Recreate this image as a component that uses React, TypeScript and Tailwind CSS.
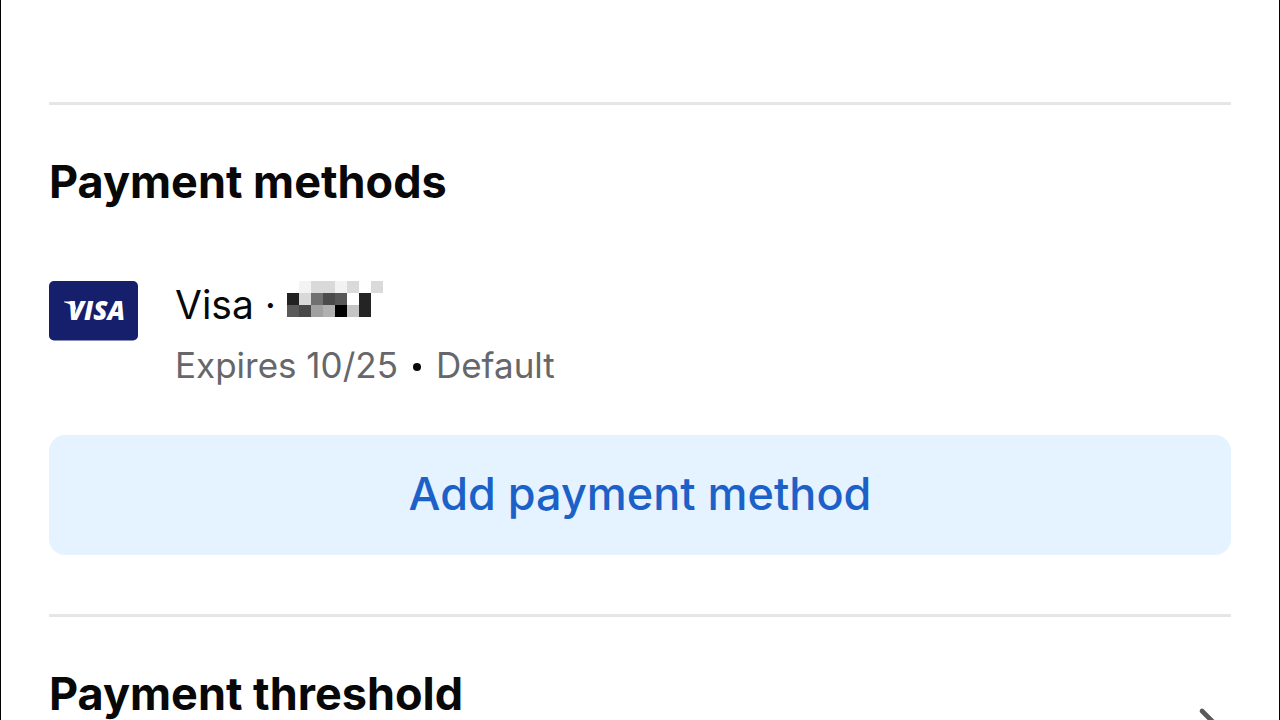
import React from 'react';
import { ChevronRight } from 'lucide-react';

// Blurred-out card digits, one shade per block, row by row
const MASK: string[] = [
  '#ffffff', '#f3f3f3', '#d9d9d9', '#d9d9d9', '#f2f2f2', '#dadada', '#fefefe', '#dadada',
  '#222222', '#d9d9d9', '#707070', '#4b4b4b', '#585858', '#ffffff', '#242424', '#ffffff',
  '#5a5a5a', '#484848', '#a0a0a0', '#b0b0b0', '#000000', '#c4c4c4', '#242424', '#ffffff',
];

const MaskedNumber: React.FC = () => (
  <span className="grid grid-cols-8 self-start" role="img" aria-label="Card number hidden">
    {MASK.map((color, i) => (
      <span key={i} className="size-3" style={{ backgroundColor: color }} />
    ))}
  </span>
);

const VisaBadge: React.FC = () => (
  <svg viewBox="0 0 90 60" className="h-[60px] w-[90px] shrink-0" role="img" aria-label="Visa">
    <rect width="89" height="59.5" rx="5" fill="#151f6b" />
    <path d="M15 20.5h8q2.500 0 3 2.500l1.500 7q-2.500-6.200-12.500-8.700z" fill="#fff" />
    <text
      x="19"
      y="39"
      fill="#fff"
      fontSize="26"
      fontWeight="800"
      fontStyle="italic"
      fontFamily="'Open Sans', sans-serif"
    >
      VISA
    </text>
  </svg>
);

const SectionTitle: React.FC<{ children: React.ReactNode }> = ({ children }) => (
  <h2 className="text-[45px] leading-[57px] font-bold text-[#080809]">{children}</h2>
);

const App: React.FC = () => {
  return (
    <main className="min-h-screen border-x border-black bg-white px-12 pt-[102px] font-['Inter',sans-serif]">
      <section className="border-t-3 border-[#e5e6e8] pt-12">
        <SectionTitle>Payment methods</SectionTitle>

        <div className="mt-[71px] flex items-start gap-9">
          <VisaBadge />
          <div>
            <div className="flex h-12 items-center gap-[11px] text-[39px] leading-12 text-[#080809]">
              <span>Visa</span>
              <span>·</span>
              <MaskedNumber />
            </div>
            <div className="mt-3 flex items-center gap-[15px] text-[35px] leading-12 text-[#65676b]">
              <span>Expires 10/25</span>
              <span className="mt-1 size-2 rounded-full bg-[#080809]" />
              <span>Default</span>
            </div>
          </div>
        </div>

        <button
          type="button"
          className="mt-[46px] h-[120px] w-full rounded-2xl bg-[#e5f2ff] pb-0.5 text-[45px] font-medium text-[#1c61c7]"
        >
          Add payment method
        </button>
      </section>

      <section className="mt-[59px] border-t-3 border-[#e5e6e8] pt-12">
        <button type="button" className="flex w-full items-start justify-between text-left">
          <SectionTitle>Payment threshold</SectionTitle>
          <ChevronRight className="-mr-1.5 mt-8 size-14 text-[#5a5a5c]" strokeWidth={2} />
        </button>
      </section>
    </main>
  );
};

export default App;
